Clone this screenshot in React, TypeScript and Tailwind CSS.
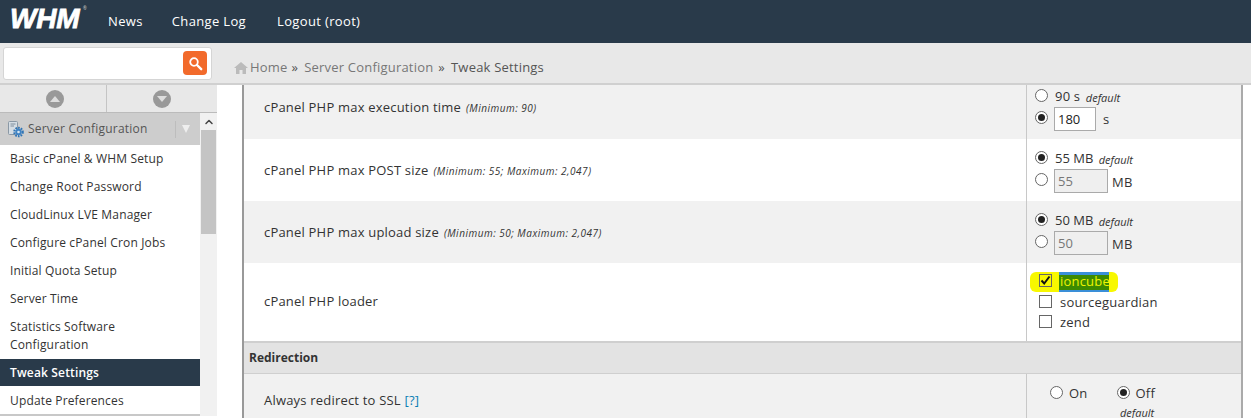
import React from 'react'
import { ChevronUp } from 'lucide-react'

const sideItems = [
  'Basic cPanel & WHM Setup',
  'Change Root Password',
  'CloudLinux LVE Manager',
  'Configure cPanel Cron Jobs',
  'Initial Quota Setup',
  'Server Time',
]

const Radio = ({ on }: { on?: boolean }) => (
  <span className="mb-[4px] flex h-[13px] w-[13px] shrink-0 items-center justify-center rounded-full border border-[#666] bg-white">
    {on && <span className="h-[7px] w-[7px] rounded-full bg-[#222]" />}
  </span>
)

const Check = ({ on }: { on?: boolean }) => (
  <span className={`mb-[2px] flex h-[13px] w-[13px] shrink-0 items-center justify-center border border-[#666] ${on ? 'bg-transparent' : 'bg-white'}`}>
    {on && (
      <svg width="11" height="11" viewBox="0 0 11 11">
        <path d="M1.5 5.5 L4.2 8.5 L9.5 1.5" fill="none" stroke="#111" strokeWidth="2" />
      </svg>
    )}
  </span>
)

const Default = () => <i className="ml-[2px] inline-block translate-y-[1px] text-[11px] tracking-normal text-[#333]">default</i>

const SizeOption = ({ value }: { value: string }) => (
  <div className="flex h-full flex-col justify-center pl-[8px] pt-[2px]">
    <div className="flex h-[20px] items-center gap-[7px]">
      <Radio on />
      <span className="tracking-normal">{value} MB <Default /></span>
    </div>
    <div className="flex h-[24px] items-center gap-[7px]">
      <Radio />
      <input
        readOnly
        disabled
        value={value}
        className="-ml-[1px] h-[24px] w-[54px] border border-[#aaa] bg-[#efefef] px-[3px] text-[13px] tracking-normal text-[#777]"
      />
      <span className="-ml-[3px] pt-[3px]">MB</span>
    </div>
  </div>
)

const Row = ({ h, gray, label, labelClass, note, children }: { h: string; gray?: boolean; label: React.ReactNode; labelClass?: string; note?: string; children: React.ReactNode }) => (
  <div className={`flex shrink-0 ${h} ${gray ? 'bg-[#f1f1f1]' : 'bg-white'}`}>
    <div className={`flex w-[782px] items-center pl-[20px] ${labelClass ?? 'pt-[2px]'}`}>
      <span>{label}</span>
      {note && <i className="ml-[5px] text-[10px] tracking-[0.5px] text-[#333]">{note}</i>}
    </div>
    <div className="flex-1 border-l border-[#c8c8c8]">{children}</div>
  </div>
)

export default function App() {
  return (
    <div className="h-[418px] w-[1251px] overflow-hidden bg-white text-[12px] text-[#333] [font-family:'Open_Sans',sans-serif]">
      <header className="flex h-[43px] items-center bg-[#293a4a] text-[13px] tracking-[0.35px] text-white">
        <div className="relative ml-[10px] mb-[5px] w-[98px] text-[28px] font-bold italic leading-none tracking-[-0.2px] [-webkit-text-stroke:0.8px_white] [font-family:'Liberation_Sans',sans-serif]">
          WHM
          <span className="absolute left-[73px] top-[1px] text-[5px] not-italic text-[#bbb] [-webkit-text-stroke:0]">®</span>
        </div>
        <nav className="flex">
          <span>News</span>
          <span className="ml-[29px]">Change Log</span>
          <span className="ml-[31px]">Logout (root)</span>
        </nav>
      </header>

      <div className="flex h-[42px] items-center border-b-2 border-[#d0d0d0] bg-[#e8e8e8]">
        <div className="ml-[3px] flex h-[33px] w-[209px] items-center justify-end rounded-[3px] border border-[#d5d5d5] bg-white pr-[4px]">
          <span className="flex h-[24px] w-[24px] items-center justify-center rounded-[4px] bg-[#f26a2b]">
            <svg width="15" height="15" viewBox="0 0 15 15" fill="none" stroke="white">
              <circle cx="6" cy="6" r="3.8" strokeWidth="1.8" />
              <path d="M9 9 L13.2 13.2" strokeWidth="2.4" strokeLinecap="round" />
            </svg>
          </span>
        </div>
        <div className="ml-[22px] mt-[10px] flex items-center text-[13px] tracking-[0.2px] text-[#777]">
          <svg width="14" height="12" viewBox="0 0 14 12" className="mr-[2px]" fill="#bbb">
            <path d="M7 0 L14 6 H12 V12 H8.5 V8 H5.5 V12 H2 V6 H0 Z" />
          </svg>
          <span>Home</span>
          <span className="ml-[4px] mr-[6px] text-[#555]">»</span>
          <span>Server Configuration</span>
          <span className="ml-[5px] mr-[6px] text-[#555]">»</span>
          <span className="text-[#555]">Tweak Settings</span>
        </div>
      </div>

      <div className="flex h-[333px]">
        <aside className="w-[217px] shrink-0 overflow-hidden">
          <div className="flex h-[28px] border-b border-[#bbb] bg-[#e8e8e8]">
            <div className="flex w-[107px] items-center justify-center border-r border-[#c4c4c4] pl-[3px]">
              <span className="flex h-[18px] w-[18px] items-center justify-center rounded-full bg-[#999]">
                <span className="h-0 w-0 border-x-[5px] border-b-[6px] border-x-transparent border-b-[#ddd]" />
              </span>
            </div>
            <div className="flex flex-1 items-center justify-center">
              <span className="flex h-[18px] w-[18px] items-center justify-center rounded-full bg-[#999]">
                <span className="h-0 w-0 border-x-[5px] border-t-[6px] border-x-transparent border-t-[#ddd]" />
              </span>
            </div>
          </div>
          <div className="flex tracking-[0.15px]">
            <div className="w-[200px]">
              <div className="flex h-[32px] items-center bg-[#cdcdcd] pl-[8px] tracking-[0.2px] text-[#555]">
                <svg width="16" height="17" viewBox="0 0 16 17" className="mr-[4px]">
                  <rect x="0.5" y="0.5" width="9" height="13" rx="1" fill="#d5dde4" stroke="#8a98a5" />
                  <path d="M2.5 3 H7.5 M2.5 5 H6" stroke="#7f8e9c" />
                  <circle cx="10.5" cy="11" r="4.2" fill="none" stroke="#2f74b5" strokeWidth="2.2" strokeDasharray="1.6 1.1" />
                  <circle cx="10.5" cy="11" r="3.2" fill="#3f83c4" />
                  <circle cx="10.5" cy="11" r="1.3" fill="#d8e6f2" />
                </svg>
                <span>Server Configuration</span>
                <span className="ml-[27px] flex h-[17px] items-center border-l border-[#bdbdbd] pl-[6px]">
                  <span className="h-0 w-0 border-x-[4px] border-t-[8px] border-x-transparent border-t-[#eee]" />
                </span>
              </div>
              <ul>
                {sideItems.map((s) => (
                  <li key={s} className="flex h-[28px] items-center pl-[10px]">{s}</li>
                ))}
                <li className="flex h-[46px] items-center pl-[10px] leading-[18px]">Statistics Software<br />Configuration</li>
                <li className="flex h-[27px] items-center bg-[#293a4a] pl-[10px] font-semibold text-white">Tweak Settings</li>
                <li className="flex h-[28px] items-center pl-[10px] pt-[2px]">Update Preferences</li>
              </ul>
              <div className="border-t-2 border-[#c8c8c8]" />
            </div>
            <div className="w-[17px] bg-[#f1f1f1]">
              <div className="flex h-[17px] items-center justify-center">
                <ChevronUp size={12} strokeWidth={3} color="#444" />
              </div>
              <div className="mx-[1px] h-[104px] bg-[#c4c4c4]" />
            </div>
          </div>
        </aside>

        <main className="ml-[25px] flex w-[1001px] flex-col border-x-2 border-[#999] text-[13px] tracking-[0.2px] [border-right-color:#aaa]">
          <Row h="h-[54px]" gray labelClass="pb-[8px]" label="cPanel PHP max execution time" note="(Minimum: 90)">
            <div className="pl-[8px] pt-[2px]">
              <div className="flex h-[20px] items-center gap-[7px]">
                <Radio />
                <span>90 s <Default /></span>
              </div>
              <div className="flex h-[24px] items-center gap-[7px]">
                <Radio on />
                <input readOnly value="180" className="-ml-[1px] h-[24px] w-[42px] border border-[#aaa] bg-white px-[3px] text-[13px] tracking-normal text-[#222]" />
                <span className="pt-[2px]">s</span>
              </div>
            </div>
          </Row>
          <Row h="h-[62px]" label="cPanel PHP max POST size" note="(Minimum: 55; Maximum: 2,047)">
            <SizeOption value="55" />
          </Row>
          <Row h="h-[62px]" gray label="cPanel PHP max upload size" note="(Minimum: 50; Maximum: 2,047)">
            <SizeOption value="50" />
          </Row>
          <Row h="h-[78px]" labelClass="pt-0" label="cPanel PHP loader">
            <div className="flex h-full flex-col justify-center pl-[12px]">
              <div className="-ml-[9px] flex h-[20px] w-[88px] items-center rounded-[6px] bg-[#f8f800] pl-[9px]">
                <Check on />
                <span className="ml-[7px] flex h-[20px] w-[50px] items-center bg-[#3d8a00] pl-[1px] text-[#eef500] [box-shadow:inset_0_3px_0_#3a8fd8,inset_0_-2px_0_#3a8fd8]">ioncube</span>
              </div>
              <div className="mt-[1px] flex h-[20px] items-center gap-[8px]">
                <Check />
                <span>sourceguardian</span>
              </div>
              <div className="flex h-[20px] items-center gap-[8px]">
                <Check />
                <span>zend</span>
              </div>
            </div>
          </Row>
          <div className="flex h-[33px] shrink-0 items-center border-y-2 border-y-[#cfcfcf] bg-[#e3e3e3] pl-[5px] text-[12px] font-bold tracking-normal [border-bottom-width:1px]">
            Redirection
          </div>
          <Row h="h-[44px]" gray labelClass="pt-[10px]" label={<>Always redirect to SSL <span className="text-[#0b7fb5]">[?]</span></>}>
            <div className="pl-[23px] pt-[10px]">
              <div className="flex h-[20px] items-center">
                <Radio />
                <span className="ml-[6px]">On</span>
                <span className="ml-[29px] flex"><Radio on /></span>
                <span className="ml-[6px]">Off</span>
              </div>
              <div className="ml-[68px] leading-[14px]"><Default /></div>
            </div>
          </Row>
        </main>
      </div>
    </div>
  )
}
